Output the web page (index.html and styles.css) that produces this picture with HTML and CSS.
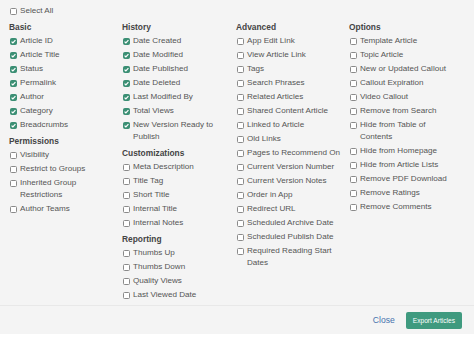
FILE: index.html
```html
<!DOCTYPE html>
<html>
<head>
<meta charset="utf-8">
<link rel="stylesheet" href="styles.css">
</head>
<body>
<div class="modal">
  <div class="content">
    <label class="item"><span class="box"></span><span class="txt">Select All</span></label>
    <div class="columns">
      <div class="col">
        <div class="heading">Basic</div>
        <label class="item"><span class="box on"><svg viewBox="0 0 8 8"><path d="M1.8 4.1 3.3 5.6 6.2 2.5"/></svg></span><span class="txt">Article ID</span></label>
        <label class="item"><span class="box on"><svg viewBox="0 0 8 8"><path d="M1.8 4.1 3.3 5.6 6.2 2.5"/></svg></span><span class="txt">Article Title</span></label>
        <label class="item"><span class="box on"><svg viewBox="0 0 8 8"><path d="M1.8 4.1 3.3 5.6 6.2 2.5"/></svg></span><span class="txt">Status</span></label>
        <label class="item"><span class="box on"><svg viewBox="0 0 8 8"><path d="M1.8 4.1 3.3 5.6 6.2 2.5"/></svg></span><span class="txt">Permalink</span></label>
        <label class="item"><span class="box on"><svg viewBox="0 0 8 8"><path d="M1.8 4.1 3.3 5.6 6.2 2.5"/></svg></span><span class="txt">Author</span></label>
        <label class="item"><span class="box on"><svg viewBox="0 0 8 8"><path d="M1.8 4.1 3.3 5.6 6.2 2.5"/></svg></span><span class="txt">Category</span></label>
        <label class="item"><span class="box on"><svg viewBox="0 0 8 8"><path d="M1.8 4.1 3.3 5.6 6.2 2.5"/></svg></span><span class="txt">Breadcrumbs</span></label>
        <div class="heading">Permissions</div>
        <label class="item"><span class="box"></span><span class="txt">Visibility</span></label>
        <label class="item"><span class="box"></span><span class="txt">Restrict to Groups</span></label>
        <label class="item"><span class="box"></span><span class="txt">Inherited Group<br>Restrictions</span></label>
        <label class="item"><span class="box"></span><span class="txt">Author Teams</span></label>
      </div>
      <div class="col">
        <div class="heading">History</div>
        <label class="item"><span class="box on"><svg viewBox="0 0 8 8"><path d="M1.8 4.1 3.3 5.6 6.2 2.5"/></svg></span><span class="txt">Date Created</span></label>
        <label class="item"><span class="box on"><svg viewBox="0 0 8 8"><path d="M1.8 4.1 3.3 5.6 6.2 2.5"/></svg></span><span class="txt">Date Modified</span></label>
        <label class="item"><span class="box on"><svg viewBox="0 0 8 8"><path d="M1.8 4.1 3.3 5.6 6.2 2.5"/></svg></span><span class="txt">Date Published</span></label>
        <label class="item"><span class="box on"><svg viewBox="0 0 8 8"><path d="M1.8 4.1 3.3 5.6 6.2 2.5"/></svg></span><span class="txt">Date Deleted</span></label>
        <label class="item"><span class="box on"><svg viewBox="0 0 8 8"><path d="M1.8 4.1 3.3 5.6 6.2 2.5"/></svg></span><span class="txt">Last Modified By</span></label>
        <label class="item"><span class="box on"><svg viewBox="0 0 8 8"><path d="M1.8 4.1 3.3 5.6 6.2 2.5"/></svg></span><span class="txt">Total Views</span></label>
        <label class="item"><span class="box on"><svg viewBox="0 0 8 8"><path d="M1.8 4.1 3.3 5.6 6.2 2.5"/></svg></span><span class="txt">New Version Ready to<br>Publish</span></label>
        <div class="heading">Customizations</div>
        <label class="item"><span class="box"></span><span class="txt">Meta Description</span></label>
        <label class="item"><span class="box"></span><span class="txt">Title Tag</span></label>
        <label class="item"><span class="box"></span><span class="txt">Short Title</span></label>
        <label class="item"><span class="box"></span><span class="txt">Internal Title</span></label>
        <label class="item"><span class="box"></span><span class="txt">Internal Notes</span></label>
        <div class="heading">Reporting</div>
        <label class="item"><span class="box"></span><span class="txt">Thumbs Up</span></label>
        <label class="item"><span class="box"></span><span class="txt">Thumbs Down</span></label>
        <label class="item"><span class="box"></span><span class="txt">Quality Views</span></label>
        <label class="item"><span class="box"></span><span class="txt">Last Viewed Date</span></label>
      </div>
      <div class="col">
        <div class="heading">Advanced</div>
        <label class="item"><span class="box"></span><span class="txt">App Edit Link</span></label>
        <label class="item"><span class="box"></span><span class="txt">View Article Link</span></label>
        <label class="item"><span class="box"></span><span class="txt">Tags</span></label>
        <label class="item"><span class="box"></span><span class="txt">Search Phrases</span></label>
        <label class="item"><span class="box"></span><span class="txt">Related Articles</span></label>
        <label class="item"><span class="box"></span><span class="txt">Shared Content Article</span></label>
        <label class="item"><span class="box"></span><span class="txt">Linked to Article</span></label>
        <label class="item"><span class="box"></span><span class="txt">Old Links</span></label>
        <label class="item"><span class="box"></span><span class="txt">Pages to Recommend On</span></label>
        <label class="item"><span class="box"></span><span class="txt">Current Version Number</span></label>
        <label class="item"><span class="box"></span><span class="txt">Current Version Notes</span></label>
        <label class="item"><span class="box"></span><span class="txt">Order in App</span></label>
        <label class="item"><span class="box"></span><span class="txt">Redirect URL</span></label>
        <label class="item"><span class="box"></span><span class="txt">Scheduled Archive Date</span></label>
        <label class="item"><span class="box"></span><span class="txt">Scheduled Publish Date</span></label>
        <label class="item"><span class="box"></span><span class="txt">Required Reading Start<br>Dates</span></label>
      </div>
      <div class="col">
        <div class="heading">Options</div>
        <label class="item"><span class="box"></span><span class="txt">Template Article</span></label>
        <label class="item"><span class="box"></span><span class="txt">Topic Article</span></label>
        <label class="item"><span class="box"></span><span class="txt">New or Updated Callout</span></label>
        <label class="item"><span class="box"></span><span class="txt">Callout Expiration</span></label>
        <label class="item"><span class="box"></span><span class="txt">Video Callout</span></label>
        <label class="item"><span class="box"></span><span class="txt">Remove from Search</span></label>
        <label class="item"><span class="box"></span><span class="txt">Hide from Table of<br>Contents</span></label>
        <label class="item"><span class="box"></span><span class="txt">Hide from Homepage</span></label>
        <label class="item"><span class="box"></span><span class="txt">Hide from Article Lists</span></label>
        <label class="item"><span class="box"></span><span class="txt">Remove PDF Download</span></label>
        <label class="item"><span class="box"></span><span class="txt">Remove Ratings</span></label>
        <label class="item"><span class="box"></span><span class="txt">Remove Comments</span></label>
      </div>
    </div>
  </div>
  <div class="footer">
    <a class="close">Close</a>
    <button class="export">Export Articles</button>
  </div>
</div>
</body>
</html>
```

FILE: styles.css
```css
html, body {
  margin: 0;
  padding: 0;
  background: #ffffff;
}
body {
  font-family: "Liberation Sans", Arial, sans-serif;
  color: #555555;
  font-size: 8.1px;
}
.modal {
  width: 474px;
  height: 334px;
  background: #f4f4f4;
  display: flex;
  flex-direction: column;
}
.content {
  padding: 5px 0 0 9px;
  height: 305px;
  box-sizing: border-box;
}
.columns {
  display: grid;
  grid-template-columns: 113px 114px 113px 113px;
}
.col {
  display: flex;
  flex-direction: column;
}
.heading {
  font-weight: bold;
  color: #444444;
  font-size: 8.4px;
  line-height: 12px;
  margin-top: 2px;
  margin-bottom: 2px;
}
.item {
  display: flex;
  align-items: flex-start;
  line-height: 12px;
  margin-bottom: 2px;
  white-space: nowrap;
}
.box {
  flex: none;
  width: 7px;
  height: 7px;
  margin-top: 3px;
  margin-right: 3px;
  margin-left: 1px;
  border: 1px solid #8a8a8a;
  border-radius: 1.5px;
  box-sizing: border-box;
  background: #ffffff;
  display: flex;
}
.box.on {
  background: #3b8f74;
  border-color: #3b8f74;
}
.box svg {
  width: 7px;
  height: 7px;
  margin: -1px;
}
.box svg path {
  fill: none;
  stroke: #ffffff;
  stroke-width: 1.4;
}
.footer {
  border-top: 1px solid #e8e8e8;
  flex: 1;
  display: flex;
  justify-content: flex-end;
  align-items: center;
  padding-right: 12px;
  gap: 11px;
}
.close {
  color: #4672ad;
  font-size: 8.6px;
}
.export {
  background: #3f9a7f;
  color: #ffffff;
  border: none;
  border-radius: 2px;
  font-family: "Liberation Sans", Arial, sans-serif;
  font-size: 6.6px;
  height: 17px;
  padding: 0 7px;
}
```
